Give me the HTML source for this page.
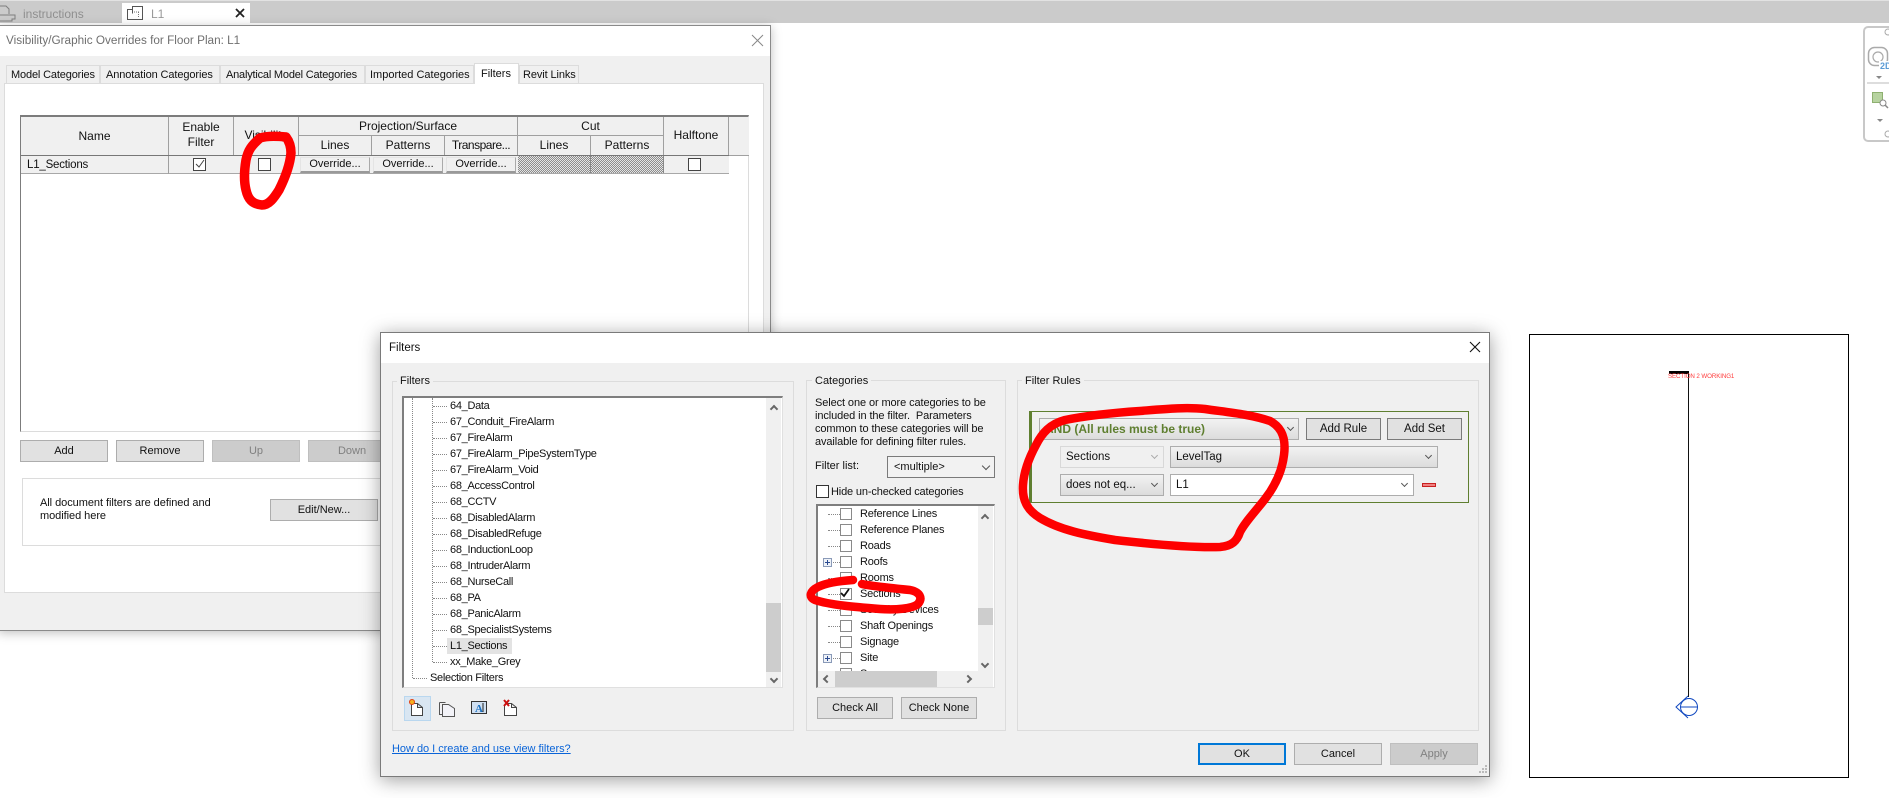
<!DOCTYPE html>
<html><head><meta charset="utf-8"><style>
html,body{margin:0;padding:0;background:#fff}
body{width:1889px;height:798px;position:relative;overflow:hidden;font-family:"Liberation Sans",sans-serif;font-size:11px;color:#111}
div,span{position:absolute;box-sizing:border-box}
.t{white-space:nowrap;line-height:16px;height:16px}
.c{text-align:center}
.b{background:#e1e1e1;border:1px solid #adadad;text-align:center;line-height:20px;white-space:nowrap}
.d{background:#ccc;border:1px solid #bfbfbf;color:#808080;text-align:center;line-height:20px}
.h{background:#f0f0f0;border-right:1px solid #a0a0a0;border-bottom:1px solid #a0a0a0;text-align:center;display:block}
.ov{background:#f0f0f0;border:1px solid #e4e4e4;border-bottom:2px solid #999;border-right:1px solid #aaa;text-align:center;line-height:13px;height:16px;top:157px;width:70px}
.cb{width:13px;height:13px;background:#fff;border:1px solid #444}
.cs{width:12px;height:12px;background:#fff;border:1px solid #8a8a8a}
.gr{border:1px solid #dcdcdc}
.lg{background:#f0f0f0;padding:0 3px;white-space:nowrap;line-height:14px;height:14px}
.tr{color:#111;letter-spacing:-.3px}
.ct{letter-spacing:-.2px}
.hd{border-top:1px dotted #888;height:1px}
.vd{border-left:1px dotted #888;width:1px}
.cm{background:linear-gradient(#f2f2f2,#dcdcdc);border:1px solid #adadad;line-height:20px;padding-left:5px;white-space:nowrap}
.ar{width:6px;height:6px;border-right:1px solid #555;border-bottom:1px solid #555;transform:rotate(45deg)}
</style></head><body>

<!-- top bar -->
<div style="left:0;top:0;width:1889px;height:23px;background:#cbcbcb"></div>
<div style="left:0;top:0;width:1889px;height:1px;background:#e2e2e2"></div>
<div style="left:122px;top:3px;width:128px;height:20px;background:#fff"></div>
<div class="t" style="left:23px;top:6px;color:#8f8f8f;font-size:12px">instructions</div>
<div class="t" style="left:151px;top:6px;color:#9a9a9a;font-size:12px">L1</div>
<svg style="position:absolute;left:0;top:0" width="260" height="24" viewBox="0 0 260 24">
<path d="M0 6h6l3 3v5M0 15h15v4h-3v2H0" fill="none" stroke="#7f7f7f" stroke-width="1"/>
<path d="M127.500 9.500h5v-3h10v13h-15zM132.500 9.500v4" fill="none" stroke="#555" stroke-width="1"/>
<path d="M134 12h5M138.500 12v5" fill="none" stroke="#777" stroke-dasharray="1 1"/>
<path d="M236 9l8 8M244 9l-8 8" stroke="#222" stroke-width="1.800"/>
</svg>

<!-- right toolbar -->
<div style="left:1863px;top:26px;width:40px;height:116px;background:#fff;border:2px solid #c8c8c8;border-radius:5px"></div>
<svg style="position:absolute;left:1860px;top:24px" width="29" height="120" viewBox="0 0 29 120">
<circle cx="28" cy="8" r="3" fill="#fff" stroke="#aaa"/>
<rect x="8.500" y="23.500" width="19" height="18" rx="6" fill="#fff" stroke="#aaa" stroke-width="1.500"/>
<circle cx="18" cy="33" r="5" fill="none" stroke="#aaa" stroke-width="1.200"/>
<rect x="19" y="37" width="10" height="9" fill="#fff"/>
<text x="20" y="45" font-family="Liberation Sans" font-size="9" font-weight="bold" fill="#5b9bd5">2D</text>
<path d="M16 52h6l-3 3z" fill="#888"/>
<path d="M7 59h22" stroke="#bbb"/>
<rect x="12.500" y="68.500" width="10" height="10" fill="#b7d3a0" stroke="#8eb070"/>
<circle cx="23" cy="79" r="3" fill="#fff" stroke="#888"/>
<path d="M25 81l3 3" stroke="#888" stroke-width="1.500"/>
<path d="M17 95h6l-3 3z" fill="#888"/>
<circle cx="28" cy="110" r="3" fill="#fff" stroke="#aaa"/>
</svg>

<!-- section sheet -->
<div style="left:1529px;top:334px;width:320px;height:444px;border:1px solid #000;background:#fff"></div>
<div style="left:1669px;top:371px;width:20px;height:3px;background:#000"></div>
<div style="left:1688px;top:374px;width:1px;height:323px;background:#111"></div>
<svg style="position:absolute;left:1670px;top:690px" width="36" height="36" viewBox="0 0 36 36">
<circle cx="19" cy="17" r="8.500" fill="none" stroke="#1048c0" stroke-width="1"/>
<path d="M18 6L6 17L18 28M10 17H28" fill="none" stroke="#1048c0" stroke-width="1"/>
</svg>
<div class="t" style="left:1668px;top:369px;color:#ff3c3c;font-size:6.200px;letter-spacing:-.1px">SECTION 2 WORKING1</div>

<!-- Dialog 1 -->
<div style="left:-2px;top:25px;width:773px;height:606px;background:#f0f0f0;border:1px solid #8a8a8a;box-shadow:0 2px 10px rgba(0,0,0,.25)"></div>
<div style="left:0;top:26px;width:770px;height:30px;background:#fff"></div>
<div class="t" style="left:6px;top:33px;color:#6f6f6f;font-size:11.750px">Visibility/Graphic Overrides for Floor Plan: L1</div>
<svg style="position:absolute;left:750px;top:33px" width="16" height="16"><path d="M2 2l11 11M13 2L2 13" stroke="#888" stroke-width="1"/></svg>

<div style="left:4px;top:83px;width:760px;height:510px;background:#fff;border:1px solid #dcdcdc"></div>
<div style="left:6px;top:65px;width:94px;height:19px;background:#f0f0f0;border:1px solid #dcdcdc"></div>
<div style="left:100px;top:65px;width:120px;height:19px;background:#f0f0f0;border:1px solid #dcdcdc"></div>
<div style="left:220px;top:65px;width:145px;height:19px;background:#f0f0f0;border:1px solid #dcdcdc"></div>
<div style="left:365px;top:65px;width:109px;height:19px;background:#f0f0f0;border:1px solid #dcdcdc"></div>
<div style="left:519px;top:65px;width:60px;height:19px;background:#f0f0f0;border:1px solid #dcdcdc"></div>
<div style="left:474px;top:63px;width:45px;height:21px;background:#fff;border:1px solid #dcdcdc;border-bottom:0"></div>
<div class="t" style="left:11px;top:67px;letter-spacing:-.15px">Model Categories</div>
<div class="t" style="left:106px;top:67px;letter-spacing:-.1px">Annotation Categories</div>
<div class="t" style="left:226px;top:67px;letter-spacing:-.2px">Analytical Model Categories</div>
<div class="t" style="left:370px;top:67px">Imported Categories</div>
<div class="t" style="left:481px;top:66px">Filters</div>
<div class="t" style="left:523px;top:67px;letter-spacing:-.1px">Revit Links</div>

<!-- table -->
<div style="left:20px;top:115px;width:729px;height:317px;border-left:1px solid #7c7c7c;border-top:2px solid #7c7c7c;border-right:1px solid #dcdcdc;border-bottom:1px solid #dcdcdc"></div>
<div class="h" style="left:21px;top:117px;width:148px;height:39px;line-height:38px;font-size:12px">Name</div>
<div class="h" style="left:169px;top:117px;width:65px;height:39px;line-height:15px;padding-top:3px;font-size:12px">Enable<br>Filter</div>
<div class="h" style="left:234px;top:117px;width:65px;height:39px;line-height:36px;font-size:12px">Visibility</div>
<div class="h" style="left:299px;top:117px;width:219px;height:19px;line-height:18px;font-size:12px">Projection/Surface</div>
<div class="h" style="left:299px;top:136px;width:73px;height:20px;line-height:19px;font-size:12px">Lines</div>
<div class="h" style="left:372px;top:136px;width:73px;height:20px;line-height:19px;font-size:12px">Patterns</div>
<div class="h" style="left:445px;top:136px;width:73px;height:20px;line-height:19px;font-size:12px;letter-spacing:-.5px">Transpare...</div>
<div class="h" style="left:518px;top:117px;width:146px;height:19px;line-height:18px;font-size:12px">Cut</div>
<div class="h" style="left:518px;top:136px;width:73px;height:20px;line-height:19px;font-size:12px">Lines</div>
<div class="h" style="left:591px;top:136px;width:73px;height:20px;line-height:19px;font-size:12px">Patterns</div>
<div class="h" style="left:664px;top:117px;width:65px;height:39px;line-height:36px;font-size:12px">Halftone</div>
<div style="left:729px;top:117px;width:20px;height:39px;background:#f0f0f0;border-bottom:1px solid #a0a0a0"></div>
<div style="left:21px;top:155px;width:708px;height:1px;background:#777"></div>
<div style="left:21px;top:156px;width:708px;height:18px;background:#f0f0f0;border-bottom:1px solid #a8a8a8"></div>
<div style="left:168px;top:156px;width:1px;height:18px;background:#a0a0a0"></div>
<div class="t" style="left:27px;top:157px;font-size:11.500px;letter-spacing:-.2px">L1_Sections</div>
<div class="cb" style="left:193px;top:158px"></div>
<svg style="position:absolute;left:193px;top:158px" width="13" height="13"><path d="M3 6l3 3 5-7" fill="none" stroke="#444" stroke-width="1"/></svg>
<div class="cb" style="left:258px;top:158px"></div>
<div class="cb" style="left:688px;top:158px"></div>
<div class="ov" style="left:300px">Override...</div>
<div class="ov" style="left:373px">Override...</div>
<div class="ov" style="left:446px">Override...</div>
<div style="left:518px;top:156px;width:146px;height:17px;background:repeating-conic-gradient(#8c8c8c 0 25%,#e4e4e4 0 50%) 0 0/2px 2px;border-right:1px solid #888"></div>
<div style="left:590px;top:156px;width:1px;height:17px;background:#888"></div>

<div class="b" style="left:20px;top:440px;width:88px;height:22px">Add</div>
<div class="b" style="left:116px;top:440px;width:88px;height:22px">Remove</div>
<div class="d" style="left:212px;top:440px;width:88px;height:22px">Up</div>
<div class="d" style="left:308px;top:440px;width:88px;height:22px">Down</div>
<div class="gr" style="left:22px;top:478px;width:735px;height:68px"></div>
<div style="left:40px;top:497px;line-height:13px;white-space:nowrap;letter-spacing:-.05px">All document filters are defined and<br>modified here</div>
<div class="b" style="left:270px;top:499px;width:108px;height:22px">Edit/New...</div>

<!-- Dialog 2 -->
<div style="left:380px;top:332px;width:1110px;height:445px;background:#f0f0f0;border:1px solid #7a7a7a;box-shadow:0 3px 18px rgba(0,0,0,.38)"></div>
<div style="left:381px;top:333px;width:1108px;height:30px;background:#fff"></div>
<div class="t" style="left:389px;top:340px;font-size:11.500px">Filters</div>
<svg style="position:absolute;left:1468px;top:340px" width="16" height="16"><path d="M2 2l10 10M12 2L2 12" stroke="#111" stroke-width="1.100"/></svg>

<!-- Filters group -->
<div class="gr" style="left:392px;top:381px;width:402px;height:350px"></div>
<div class="lg" style="left:397px;top:374px">Filters</div>
<div style="left:402px;top:396px;width:381px;height:292px;background:#fff;border:1px solid #e0e0e0;border-left:2px solid #7e7e7e;border-top:2px solid #7e7e7e"></div>
<div class="vd" style="left:412px;top:398px;height:280px"></div>
<div class="vd" style="left:432px;top:398px;height:264px"></div>
<div class="hd" style="left:433px;top:406px;width:14px"></div>
<div class="hd" style="left:433px;top:422px;width:14px"></div>
<div class="hd" style="left:433px;top:438px;width:14px"></div>
<div class="hd" style="left:433px;top:454px;width:14px"></div>
<div class="hd" style="left:433px;top:470px;width:14px"></div>
<div class="hd" style="left:433px;top:486px;width:14px"></div>
<div class="hd" style="left:433px;top:502px;width:14px"></div>
<div class="hd" style="left:433px;top:518px;width:14px"></div>
<div class="hd" style="left:433px;top:534px;width:14px"></div>
<div class="hd" style="left:433px;top:550px;width:14px"></div>
<div class="hd" style="left:433px;top:566px;width:14px"></div>
<div class="hd" style="left:433px;top:582px;width:14px"></div>
<div class="hd" style="left:433px;top:598px;width:14px"></div>
<div class="hd" style="left:433px;top:614px;width:14px"></div>
<div class="hd" style="left:433px;top:630px;width:14px"></div>
<div class="hd" style="left:433px;top:646px;width:14px"></div>
<div class="hd" style="left:433px;top:662px;width:14px"></div>
<div class="hd" style="left:413px;top:678px;width:14px"></div>
<div style="left:447px;top:638px;width:65px;height:16px;background:#e3e3e3"></div>
<div class="t tr" style="left:450px;top:398px">64_Data</div>
<div class="t tr" style="left:450px;top:414px">67_Conduit_FireAlarm</div>
<div class="t tr" style="left:450px;top:430px">67_FireAlarm</div>
<div class="t tr" style="left:450px;top:446px">67_FireAlarm_PipeSystemType</div>
<div class="t tr" style="left:450px;top:462px">67_FireAlarm_Void</div>
<div class="t tr" style="left:450px;top:478px">68_AccessControl</div>
<div class="t tr" style="left:450px;top:494px">68_CCTV</div>
<div class="t tr" style="left:450px;top:510px">68_DisabledAlarm</div>
<div class="t tr" style="left:450px;top:526px">68_DisabledRefuge</div>
<div class="t tr" style="left:450px;top:542px">68_InductionLoop</div>
<div class="t tr" style="left:450px;top:558px">68_IntruderAlarm</div>
<div class="t tr" style="left:450px;top:574px">68_NurseCall</div>
<div class="t tr" style="left:450px;top:590px">68_PA</div>
<div class="t tr" style="left:450px;top:606px">68_PanicAlarm</div>
<div class="t tr" style="left:450px;top:622px">68_SpecialistSystems</div>
<div class="t tr" style="left:450px;top:638px">L1_Sections</div>
<div class="t tr" style="left:450px;top:654px">xx_Make_Grey</div>
<div class="t tr" style="left:430px;top:670px">Selection Filters</div>
<div style="left:766px;top:398px;width:15px;height:289px;background:#f0f0f0"></div>
<div style="left:766px;top:603px;width:15px;height:69px;background:#cdcdcd"></div>
<div class="ar" style="left:771px;top:406px;transform:rotate(225deg);border-color:#666;border-width:2px"></div>
<div class="ar" style="left:771px;top:676px;border-color:#666;border-width:2px"></div>

<div style="left:404px;top:696px;width:27px;height:25px;background:#d9e6f2;border:1px solid #b9d7ef"></div>
<svg style="position:absolute;left:400px;top:694px" width="125" height="30" viewBox="0 0 125 30">
<path d="M11.500 9.500h6l5 4v8h-11zM17.500 9.500v4h5" fill="#fff" stroke="#444"/>
<circle cx="12" cy="8" r="2.500" fill="#f5b120" stroke="#e04010"/>
<path d="M39.500 8.500h6M39.500 8.500v12h3M42.500 10.500h6l6 4v8h-12z" fill="#f3f3f8" stroke="#555"/>
<rect x="71.500" y="7.500" width="15" height="12" fill="#cfe0f2" stroke="#333"/>
<text x="75" y="18" font-family="Liberation Serif" font-size="11" font-weight="bold" fill="#1a6fc0">A</text>
<path d="M83 9v9" stroke="#222"/>
<path d="M105.500 9.500h6l5 4v8h-12v-11M111.500 9.500v4h5" fill="#fff" stroke="#444"/>
<path d="M104 6l5 6M109 6l-5 6" stroke="#cc1010" stroke-width="2"/>
</svg>
<div class="t" style="left:392px;top:741px;color:#0a64d8;text-decoration:underline;letter-spacing:-.03px">How do I create and use view filters?</div>

<!-- Categories -->
<div class="gr" style="left:806px;top:380px;width:200px;height:351px"></div>
<div class="lg" style="left:812px;top:374px">Categories</div>
<div style="left:815px;top:397px;line-height:13px;white-space:nowrap;letter-spacing:-.1px">Select one or more categories to be<br>included in the filter.&nbsp; Parameters<br>common to these categories will be<br>available for defining filter rules.</div>
<div class="t" style="left:815px;top:458px">Filter list:</div>
<div style="left:887px;top:456px;width:108px;height:22px;background:#f2f2f2;border:1px solid #7a7a7a;padding-left:6px;line-height:20px">&lt;multiple&gt;</div>
<div class="ar" style="left:983px;top:463px"></div>
<div class="cs" style="left:816px;top:485px;width:13px;height:13px;border-color:#333"></div>
<div class="t" style="left:831px;top:484px;letter-spacing:-.15px">Hide un-checked categories</div>

<div style="left:816px;top:504px;width:179px;height:184px;background:#fff;border:1px solid #e0e0e0;border-left:2px solid #7e7e7e;border-top:2px solid #7e7e7e;overflow:hidden">
<div class="hd" style="left:10px;top:8px;width:12px"></div><div class="cs" style="left:22px;top:2px"></div><div class="t ct" style="left:42px;top:0">Reference Lines</div>
<div class="hd" style="left:10px;top:24px;width:12px"></div><div class="cs" style="left:22px;top:18px"></div><div class="t ct" style="left:42px;top:16px">Reference Planes</div>
<div class="hd" style="left:10px;top:40px;width:12px"></div><div class="cs" style="left:22px;top:34px"></div><div class="t ct" style="left:42px;top:32px">Roads</div>
<div class="hd" style="left:10px;top:56px;width:12px"></div><div class="cs" style="left:22px;top:50px"></div><div class="t ct" style="left:42px;top:48px">Roofs</div>
<div class="hd" style="left:10px;top:72px;width:12px"></div><div class="cs" style="left:22px;top:66px"></div><div class="t ct" style="left:42px;top:64px">Rooms</div>
<div class="hd" style="left:10px;top:88px;width:12px"></div><div class="cs" style="left:22px;top:82px"></div><div class="t ct" style="left:42px;top:80px">Sections</div>
<div class="hd" style="left:10px;top:104px;width:12px"></div><div class="cs" style="left:22px;top:98px"></div><div class="t ct" style="left:42px;top:96px">Security Devices</div>
<div class="hd" style="left:10px;top:120px;width:12px"></div><div class="cs" style="left:22px;top:114px"></div><div class="t ct" style="left:42px;top:112px">Shaft Openings</div>
<div class="hd" style="left:10px;top:136px;width:12px"></div><div class="cs" style="left:22px;top:130px"></div><div class="t ct" style="left:42px;top:128px">Signage</div>
<div class="hd" style="left:10px;top:152px;width:12px"></div><div class="cs" style="left:22px;top:146px"></div><div class="t ct" style="left:42px;top:144px">Site</div>
<div class="cs" style="left:22px;top:162px"></div><div class="t ct" style="left:42px;top:160px">Spaces</div>
<div style="left:5px;top:52px;width:9px;height:9px;background:#eef2f8;border:1px solid #8a9ab8"></div>
<div style="left:7px;top:56px;width:5px;height:1px;background:#2a4a90"></div><div style="left:9px;top:54px;width:1px;height:5px;background:#2a4a90"></div>
<div style="left:5px;top:148px;width:9px;height:9px;background:#eef2f8;border:1px solid #8a9ab8"></div>
<div style="left:7px;top:152px;width:5px;height:1px;background:#2a4a90"></div><div style="left:9px;top:150px;width:1px;height:5px;background:#2a4a90"></div>
</div>
<svg style="position:absolute;left:838px;top:586px" width="14" height="14"><path d="M3 7l3 3 5-7" fill="none" stroke="#111" stroke-width="1.800"/></svg>
<div style="left:978px;top:506px;width:15px;height:165px;background:#f0f0f0"></div>
<div style="left:978px;top:608px;width:15px;height:17px;background:#cdcdcd"></div>
<div class="ar" style="left:982px;top:515px;transform:rotate(225deg);border-color:#666;border-width:2px"></div>
<div class="ar" style="left:982px;top:661px;border-color:#666;border-width:2px"></div>
<div style="left:818px;top:671px;width:175px;height:16px;background:#f0f0f0"></div>
<div style="left:835px;top:671px;width:102px;height:16px;background:#cdcdcd"></div>
<div class="ar" style="left:824px;top:676px;transform:rotate(135deg);border-color:#666;border-width:2px"></div>
<div class="ar" style="left:965px;top:676px;transform:rotate(-45deg);border-color:#666;border-width:2px"></div>
<div class="b" style="left:817px;top:697px;width:76px;height:22px">Check All</div>
<div class="b" style="left:901px;top:697px;width:76px;height:22px">Check None</div>

<!-- Filter rules -->
<div class="gr" style="left:1017px;top:380px;width:462px;height:351px"></div>
<div class="lg" style="left:1022px;top:374px">Filter Rules</div>
<div style="left:1029px;top:411px;width:440px;height:92px;border:1px solid #5f7f30;border-left:3px solid #5f7f30"></div>
<div class="cm" style="left:1039px;top:418px;width:260px;height:22px;color:#5f7f30;font-weight:bold;font-size:12px">AND (All rules must be true)</div>
<div class="ar" style="left:1288px;top:425px;width:5px;height:5px"></div>
<div class="b" style="left:1306px;top:418px;width:75px;height:22px;background:#e1e1e1;border-color:#7a7a7a;font-size:11.500px">Add Rule</div>
<div class="b" style="left:1387px;top:418px;width:75px;height:22px;background:#e1e1e1;border-color:#7a7a7a;font-size:11.500px">Add Set</div>
<div style="left:1060px;top:446px;width:104px;height:22px;background:#f0f0f0;border:1px solid #d8d8d8;padding-left:5px;line-height:20px;font-size:11.500px">Sections</div>
<div class="ar" style="left:1152px;top:453px;width:5px;height:5px;border-color:#aaa"></div>
<div class="cm" style="left:1170px;top:446px;width:268px;height:22px;font-size:11.500px">LevelTag</div>
<div class="ar" style="left:1426px;top:453px;width:5px;height:5px"></div>
<div class="cm" style="left:1060px;top:474px;width:104px;height:22px;font-size:11.500px">does not eq...</div>
<div class="ar" style="left:1152px;top:481px;width:5px;height:5px"></div>
<div style="left:1170px;top:474px;width:244px;height:22px;background:#fff;border:1px solid #adadad;padding-left:5px;line-height:20px;font-size:11.500px">L1</div>
<div class="ar" style="left:1402px;top:481px;width:5px;height:5px"></div>
<div style="left:1422px;top:483px;width:14px;height:4px;background:#f08080;border:1px solid #c82020"></div>

<div class="b" style="left:1198px;top:743px;width:88px;height:22px;border:2px solid #0078d7;line-height:18px">OK</div>
<div class="b" style="left:1294px;top:743px;width:88px;height:22px">Cancel</div>
<div class="d" style="left:1390px;top:743px;width:88px;height:22px">Apply</div>
<svg style="position:absolute;left:1479px;top:765px" width="10" height="11"><g fill="#bbb"><rect x="6" y="0" width="2" height="2"/><rect x="3" y="3" width="2" height="2"/><rect x="6" y="3" width="2" height="2"/><rect x="0" y="6" width="2" height="2"/><rect x="3" y="6" width="2" height="2"/><rect x="6" y="6" width="2" height="2"/></g></svg>

<!-- red scribbles -->
<svg style="position:absolute;left:0;top:0" width="1889" height="798" viewBox="0 0 1889 798">
<g fill="none" stroke="#fe0000" stroke-linecap="round" stroke-linejoin="round">
<path stroke-width="9.500" d="M286 137C276 136 266 136 260 138C252 145 248 150 246 160C244 172 244 182 246 190C248 199 252 204 262 205C269 205 274 198 279 190C285 178 290 165 291 153C291 146 289 141 286 137"/>
<path stroke-width="8.500" d="M853 580C838 581 826 583 818 587C810 591 808 597 815 600C830 605 855 607 880 609C895 610 912 609 918 604C923 598 920 592 910 590C890 588 870 586 862 584"/>
<path stroke-width="8.500" d="M1205 409C1185 407 1165 409 1140 411C1110 413 1085 416 1065 420C1050 424 1042 433 1036 445C1030 456 1024 470 1023 485C1022 500 1027 510 1040 518C1060 530 1085 535 1115 540C1150 544 1190 548 1220 547C1232 546 1237 541 1240 532C1245 522 1255 512 1265 499C1275 486 1282 472 1284 455C1286 440 1283 428 1270 421C1250 414 1225 412 1205 409"/>
</g></svg>
</body></html>
